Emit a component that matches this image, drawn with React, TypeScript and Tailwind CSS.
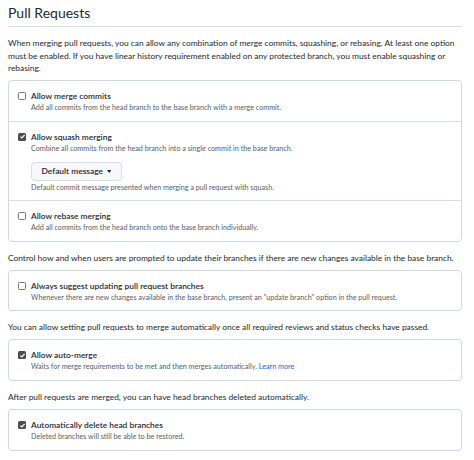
import React from "react";

function Box({ checked }: { checked: boolean }) {
  if (checked) {
    return (
      <span className="mt-[2px] flex h-[8px] w-[8px] shrink-0 items-center justify-center rounded-[1.5px] bg-[#4d4d4d]">
        <svg viewBox="0 0 8 8" className="h-[7px] w-[7px]">
          <path d="M1.6 4.1 L3.2 5.7 L6.4 2.3" fill="none" stroke="#fff" strokeWidth="1.3" />
        </svg>
      </span>
    );
  }
  return <span className="mt-[2px] h-[8px] w-[8px] shrink-0 rounded-[1.5px] border border-[#767676] bg-white" />;
}

function Row({
  checked,
  label,
  desc,
  children,
  divider,
}: {
  checked: boolean;
  label: string;
  desc: React.ReactNode;
  children?: React.ReactNode;
  divider?: boolean;
}) {
  return (
    <div className={"flex gap-[5px] pl-[9px] pr-[9px] pt-[9px] pb-[7.5px]" + (divider ? " border-t border-[#d8dee4]" : "")}>
      <Box checked={checked} />
      <div className="flex flex-col">
        <div className="text-[8.4px] font-semibold leading-[12px] text-[#24292f]">{label}</div>
        <div className="text-[7.2px] leading-[11px] text-[#57606a]">{desc}</div>
        {children}
      </div>
    </div>
  );
}

export default function App() {
  return (
    <div className="w-[474px] bg-white px-[8px] pt-[4px] pr-[12px]" style={{ fontFamily: "Lato, 'Open Sans', sans-serif" }}>
      <div className="border-b border-[#d8dee4] pb-[4px]">
        <h2 className="text-[14px] font-normal leading-[18px] text-[#24292f]">Pull Requests</h2>
      </div>
      <p className="mt-[10px] mb-[5.5px] text-[8.4px] leading-[12.6px] text-[#24292f]">
        <span className="block whitespace-nowrap">When merging pull requests, you can allow any combination of merge commits, squashing, or rebasing. At least one option</span>
        <span className="block whitespace-nowrap">must be enabled. If you have linear history requirement enabled on any protected branch, you must enable squashing or</span>
        <span className="block whitespace-nowrap">rebasing.</span>
      </p>
      <div className="rounded-[4px] border border-[#d0d7de]">
        <Row checked={false} label="Allow merge commits" desc="Add all commits from the head branch to the base branch with a merge commit." />
        <Row checked={true} divider label="Allow squash merging" desc="Combine all commits from the head branch into a single commit in the base branch.">
          <div className="mt-[8.5px] flex">
            <button className="flex h-[19px] items-center gap-[4px] rounded-[4px] border border-[#d8dee4] bg-[#f6f8fa] px-[9.5px] text-[8.4px] font-semibold text-[#24292f]">
              Default message
              <svg viewBox="0 0 6 4" className="h-[3px] w-[4.5px]">
                <path d="M0 0 L6 0 L3 4 Z" fill="#24292f" />
              </svg>
            </button>
          </div>
          <div className="mt-[0.5px] text-[7.2px] leading-[11px] text-[#57606a]">Default commit message presented when merging a pull request with squash.</div>
        </Row>
        <Row checked={false} divider label="Allow rebase merging" desc="Add all commits from the head branch onto the base branch individually." />
      </div>
      <p className="mt-[10px] mb-[5.5px] text-[8.4px] leading-[12.6px] text-[#24292f]">
        Control how and when users are prompted to update their branches if there are new changes available in the base branch.
      </p>
      <div className="rounded-[4px] border border-[#d0d7de]">
        <Row
          checked={false}
          label="Always suggest updating pull request branches"
          desc={'Whenever there are new changes available in the base branch, present an "update branch" option in the pull request.'}
        />
      </div>
      <p className="mt-[10px] mb-[5.5px] text-[8.4px] leading-[12.6px] text-[#24292f]">
        You can allow setting pull requests to merge automatically once all required reviews and status checks have passed.
      </p>
      <div className="rounded-[4px] border border-[#d0d7de]">
        <Row
          checked={true}
          label="Allow auto-merge"
          desc={
            <>
              Waits for merge requirements to be met and then merges automatically.{" "}
              <span className="text-[#0969da]">Learn more</span>
            </>
          }
        />
      </div>
      <p className="mt-[10px] mb-[5.5px] text-[8.4px] leading-[12.6px] text-[#24292f]">
        After pull requests are merged, you can have head branches deleted automatically.
      </p>
      <div className="rounded-[4px] border border-[#d0d7de]">
        <Row checked={true} label="Automatically delete head branches" desc="Deleted branches will still be able to be restored." />
      </div>
      <div className="h-[9px]" />
    </div>
  );
}
